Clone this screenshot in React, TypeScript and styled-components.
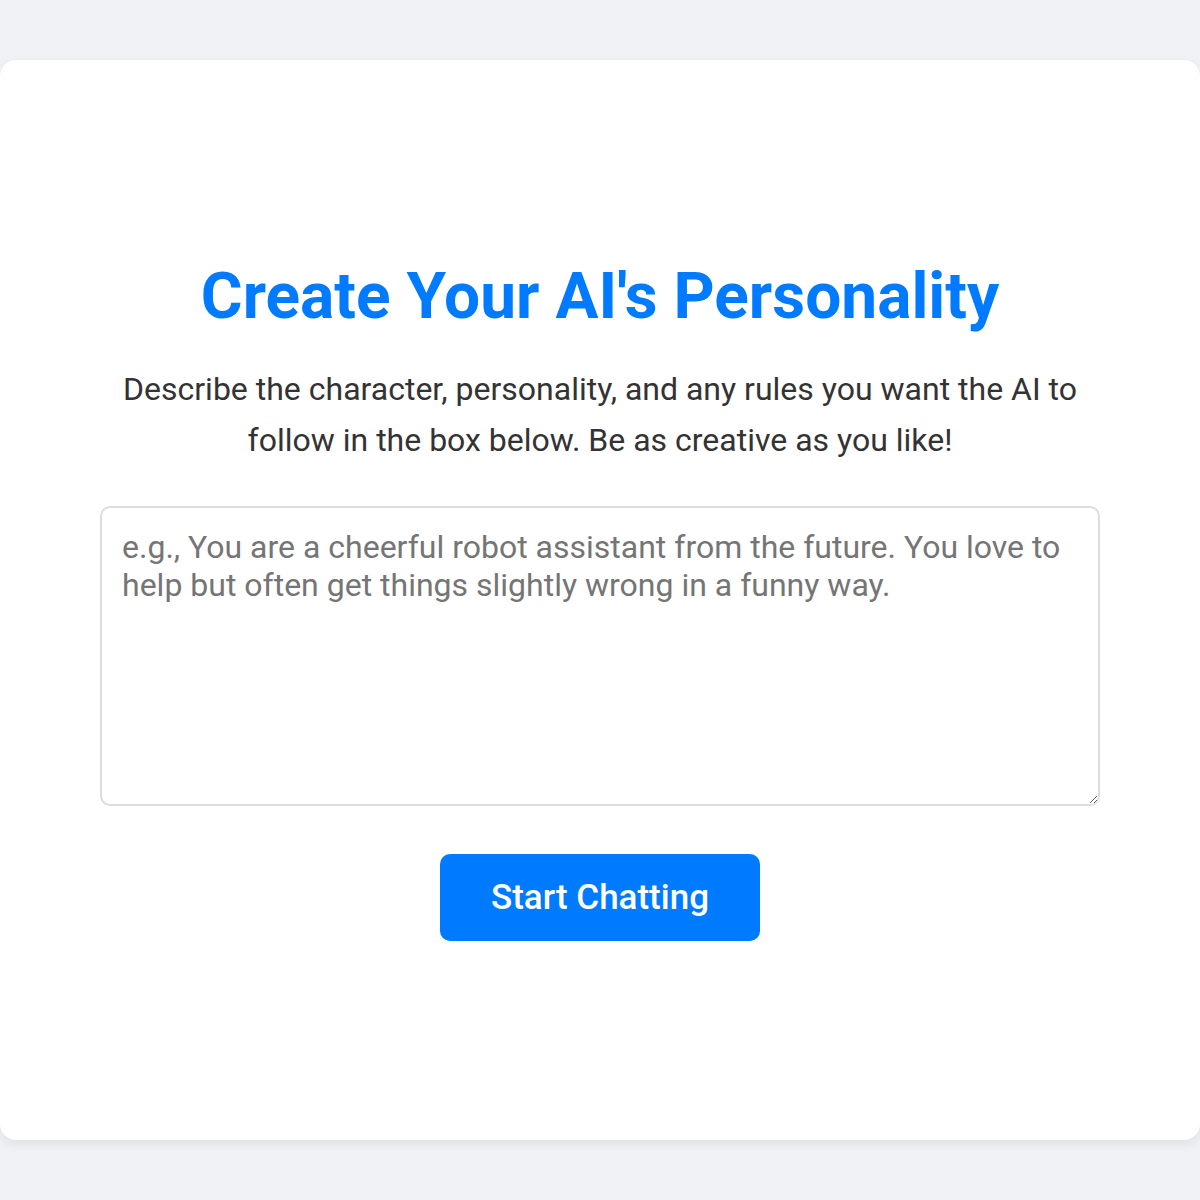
import * as React from 'react';
import styled, { createGlobalStyle } from 'styled-components';

const GlobalStyle = createGlobalStyle`
  html, body {
    margin: 0;
    padding: 0;
    background: #f0f2f5;
    font-family: Roboto, "Liberation Sans", Arial, sans-serif;
  }
  * {
    box-sizing: border-box;
  }
`;

const Page = styled.main`
  height: 1200px;
  display: flex;
  align-items: center;
  justify-content: center;
`;

const Card = styled.section`
  width: 1200px;
  height: 1080px;
  background: #ffffff;
  border-radius: 16px;
  box-shadow: 0 4px 12px rgba(0, 0, 0, 0.08);
  padding: 0 100px;
  display: flex;
  flex-direction: column;
  align-items: center;
  justify-content: center;
`;

const Title = styled.h1`
  margin: 0 0 30px;
  font-size: 64px;
  font-weight: 700;
  color: #007bff;
  line-height: normal;
  text-align: center;
`;

const Intro = styled.p`
  margin: 0 0 40px;
  font-size: 32px;
  line-height: 1.6;
  color: #333333;
  text-align: center;
`;

const PromptBox = styled.textarea`
  display: block;
  width: 100%;
  height: 300px;
  padding: 20px;
  border: 2px solid #dddddd;
  border-radius: 10px;
  font-family: inherit;
  font-size: 32px;
  line-height: normal;
  color: #333333;
  background: #ffffff;
  resize: vertical;
  outline: none;

  &::placeholder {
    color: #757575;
  }
`;

const StartButton = styled.button`
  margin-top: 48px;
  width: 320px;
  height: 87px;
  border: none;
  border-radius: 10px;
  background: #007bff;
  color: #ffffff;
  font-family: inherit;
  font-size: 35px;
  font-weight: 500;
  cursor: pointer;
`;

export default function App() {
  const [prompt, setPrompt] = React.useState('');

  return (
    <Page>
      <GlobalStyle />
      <Card>
        <Title>Create Your AI's Personality</Title>
        <Intro>
          Describe the character, personality, and any rules you want the AI to follow in the box
          below. Be as creative as you like!
        </Intro>
        <PromptBox
          value={prompt}
          onChange={e => setPrompt(e.target.value)}
          placeholder="e.g., You are a cheerful robot assistant from the future. You love to help but often get things slightly wrong in a funny way."
        />
        <StartButton type="button">Start Chatting</StartButton>
      </Card>
    </Page>
  );
}
